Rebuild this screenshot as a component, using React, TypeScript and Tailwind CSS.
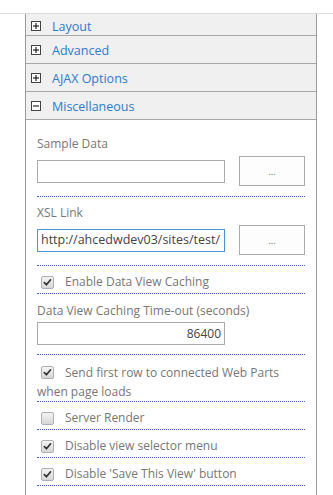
import React from "react";

const headers = [
  { label: "Layout", open: false, cut: true },
  { label: "Advanced", open: false },
  { label: "AJAX Options", open: false },
  { label: "Miscellaneous", open: true },
];

const Toggle = ({ open }: { open: boolean }) => (
  <span className="flex h-[10px] w-[10px] items-center justify-center border border-[#444] bg-white">
    <svg width="8" height="8" viewBox="0 0 8 8">
      <rect x="1" y="3.5" width="6" height="1" fill="#000" />
      {!open && <rect x="3.5" y="1" width="1" height="6" fill="#000" />}
    </svg>
  </span>
);

const Check = ({ checked }: { checked: boolean }) => (
  <span className="flex h-[13px] w-[13px] shrink-0 items-center justify-center rounded-[2px] border border-[#b0b0b0] bg-linear-to-b from-[#f5f5f5] to-[#d6d6d6]">
    {checked && (
      <svg width="9" height="9" viewBox="0 0 9 9">
        <path d="M1.4 4.6 L3.4 6.8 L7.6 1.8" fill="none" stroke="#333" strokeWidth="1.7" strokeLinecap="round" strokeLinejoin="round" />
      </svg>
    )}
  </span>
);

const DotRow = ({ children, className = "" }: { children: React.ReactNode; className?: string }) => (
  <div className={`border-b border-dotted border-[#3a66b8] ${className}`}>{children}</div>
);

const BrowseButton = () => (
  <div className="flex h-[30px] w-[66px] shrink-0 items-center justify-center border border-[#ababab] bg-[#fdfdfd] text-[9px] leading-none text-[#666]">
    ...
  </div>
);

const CheckRow = ({ checked, label }: { checked: boolean; label: string }) => (
  <DotRow className="flex h-[28px] items-center pl-[4px] pt-[5px]">
    <Check checked={checked} />
    <span className="ml-[11px]">{label}</span>
  </DotRow>
);

export default function App() {
  return (
    <div
      className="h-[495px] w-[333px] overflow-hidden bg-white text-[12px] leading-[18px] text-[#777]"
      style={{ fontFamily: '"Open Sans", "Liberation Sans", sans-serif' }}
    >
      <div className="h-[14px] border-b border-[#dcdcdc]" />
      <div className="ml-[25px] h-[481px] w-[292px] border-x border-[#9a9a9a]">
        {headers.map((h) => (
          <div
            key={h.label}
            className={`flex items-center border-b border-[#a8a8a8] bg-[#f0f0f0] pl-[5px] ${h.cut ? "h-[22px] pt-[2px]" : "h-[28px]"}`}
          >
            <Toggle open={h.open} />
            <span className="ml-[11px] pt-[3px] text-[#2b7bd1]" style={{ fontSize: "12.5px" }}>
              {h.label}
            </span>
          </div>
        ))}

        <div className="px-[11px]">
          <DotRow className="pb-[10px] pt-[15px]">
            <div className="leading-[17px]">Sample Data</div>
            <div className="mt-[4px] flex items-center gap-[14px]">
              <div className="h-[23px] w-[188px] border border-[#ababab] bg-white" />
              <BrowseButton />
            </div>
          </DotRow>

          <DotRow className="pb-[10px] pt-[7px]">
            <div className="leading-[17px]">XSL Link</div>
            <div className="mt-[4px] flex items-center gap-[14px]">
              <div className="flex h-[23px] w-[188px] items-center overflow-hidden whitespace-nowrap border border-[#4a93dd] bg-white px-[3px] text-[12.5px] text-[#444]">
                http://ahcedwdev03/sites/test/
              </div>
              <BrowseButton />
            </div>
          </DotRow>

          <CheckRow checked label="Enable Data View Caching" />

          <DotRow className="pb-[9px] pt-[8px]">
            <div className="leading-[17px]">Data View Caching Time-out (seconds)</div>
            <div className="mt-[3px] flex h-[23px] w-[188px] items-center justify-end border border-[#ababab] bg-white px-[3px] text-[#444]">
              86400
            </div>
          </DotRow>

          <DotRow className="pb-[0px] pt-[8px] leading-[19px]">
            <div className="flex items-center pl-[4px]">
              <Check checked />
              <span className="ml-[11px]">Send first row to connected Web Parts</span>
            </div>
            <div>when page loads</div>
          </DotRow>

          <CheckRow checked={false} label="Server Render" />
          <CheckRow checked label="Disable view selector menu" />
          <CheckRow checked label="Disable 'Save This View' button" />
        </div>
      </div>
    </div>
  );
}
